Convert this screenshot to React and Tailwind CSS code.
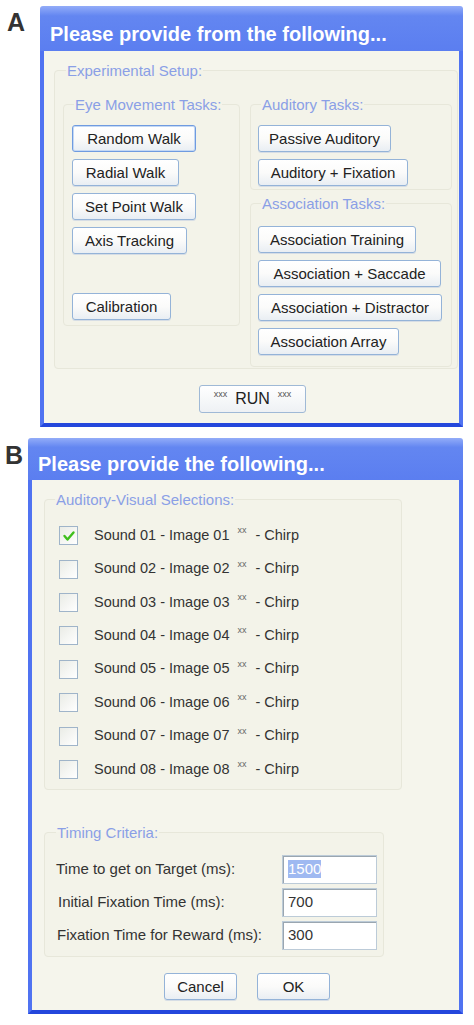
import React from "react";

const eyeTasks = [
    { label: "Random Walk", w: "w-[124px]", focus: true },
    { label: "Radial Walk", w: "w-[107px]" },
    { label: "Set Point Walk", w: "w-[124px]" },
    { label: "Axis Tracking", w: "w-[115px]" },
];

const auditoryTasks = [
    { label: "Passive Auditory", w: "w-[133px]" },
    { label: "Auditory + Fixation", w: "w-[150px]" },
];

const associationTasks = [
    { label: "Association Training", w: "w-[158px]" },
    { label: "Association + Saccade", w: "w-[183px]" },
    { label: "Association + Distractor", w: "w-[184px]" },
    { label: "Association Array", w: "w-[141px]" },
];

const sounds = ["01", "02", "03", "04", "05", "06", "07", "08"];

const timing = [
    { label: "Time to get on Target (ms):", value: "1500", selected: true, shift: "ml-0" },
    { label: "Initial Fixation Time (ms):", value: "700", shift: "ml-[2px]" },
    { label: "Fixation Time for Reward (ms):", value: "300", shift: "ml-[1px]" },
];

const XpButton = ({ children, className = "", focus = false }) => (
    <button
        className={`h-[27px] rounded-[3px] border bg-linear-to-b from-white via-[#fbfbfa] to-[#e9eef3] text-[15px] leading-none text-[#222] ${focus ? "border-[#6f9be0] shadow-[inset_0_0_0_1px_#c4d8f4]" : "border-[#94b3d8] shadow-[0_1px_0_#d6dde5]"} ${className}`}
    >
        {children}
    </button>
);

const Group = ({ title, legendMl = "ml-[10px]", className = "", children }) => (
    <fieldset className={`rounded-[4px] border border-[#e7e7da] bg-[#f3f3e9] ${className}`}>
        <legend className={`${legendMl} px-[1px] text-[15px] leading-[15px] text-[#8a9fe6]`}>{title}</legend>
        {children}
    </fieldset>
);

const TitleBar = ({ text, h, pt }) => (
    <div className={`${h} ${pt} pl-[10px] rounded-t-[3px] bg-linear-to-b from-[#93acf8] via-[#6386f1] via-[22%] to-[#5b7ef0]`}>
        <div className="text-[20px] leading-[20px] font-bold text-white">{text}</div>
    </div>
);

const Checkbox = ({ checked }) => (
    <div className="flex h-[19px] w-[19px] items-center justify-center border border-[#9fb4c9] bg-linear-to-br from-[#eaece6] to-white">
        {checked && (
            <svg width="14" height="14" viewBox="0 0 14 14">
                <polyline points="2.5,7 5.5,10.5 11.5,3.5" fill="none" stroke="#3fbf1d" strokeWidth="2.4" strokeLinecap="round" strokeLinejoin="round" />
            </svg>
        )}
    </div>
);

const App = () => {
    return (
        <div className="min-h-[1025px] w-[474px] bg-white pt-[6px] font-['Liberation_Sans',Arial,sans-serif]">
            {/* panel A */}
            <div className="flex">
                <div className="w-[40px] pl-[7px] pt-[4px] text-[25px] leading-none font-bold text-[#333]">A</div>
                <div className="w-[423px]">
                    <TitleBar text="Please provide from the following..." h="h-[45px]" pt="pt-[18px]" />
                    <div className="border-x-4 border-b-4 border-x-[#5073f1] border-b-[#2447dc] bg-[#f5f5ec] pt-[12px] pb-[10px]">
                        <Group title="Experimental Setup:" legendMl="ml-[11px]" className="ml-[10px] w-[404px]">
                            <div className="flex items-start pt-[19px] pl-[8px] pb-[1px]">
                                <Group title="Eye Movement Tasks:" className="w-[177px]">
                                    <div className="flex flex-col items-start gap-[7px] pt-[12.5px] pl-[8px] pb-[5px]">
                                        {eyeTasks.map((t) => (
                                            <XpButton key={t.label} className={t.w} focus={t.focus}>{t.label}</XpButton>
                                        ))}
                                        <XpButton className="mt-[32px] w-[99px]">Calibration</XpButton>
                                    </div>
                                </Group>
                                <div className="ml-[10px] flex w-[202px] flex-col gap-[6.5px]">
                                    <Group title="Auditory Tasks:">
                                        <div className="flex flex-col items-start gap-[7px] pt-[12.5px] pl-[7px] pb-[3px]">
                                            {auditoryTasks.map((t) => (
                                                <XpButton key={t.label} className={t.w}>{t.label}</XpButton>
                                            ))}
                                        </div>
                                    </Group>
                                    <Group title="Association Tasks:">
                                        <div className="flex flex-col items-start gap-[7px] pt-[14.5px] pl-[7px] pb-[11px]">
                                            {associationTasks.map((t) => (
                                                <XpButton key={t.label} className={t.w}>{t.label}</XpButton>
                                            ))}
                                        </div>
                                    </Group>
                                </div>
                            </div>
                        </Group>
                        <div className="mt-[16px] flex justify-center pl-[2px]">
                            <button className="flex h-[28px] w-[107px] items-center justify-center rounded-[3px] border border-[#9fb9d6] bg-linear-to-b from-white to-[#eef1f4] text-[#222]">
                                <span className="mb-[8px] text-[9px] leading-none text-[#555]">xxx</span>
                                <span className="mx-[8px] text-[16px] leading-none">RUN</span>
                                <span className="mb-[8px] text-[9px] leading-none text-[#555]">xxx</span>
                            </button>
                        </div>
                    </div>
                </div>
            </div>

            {/* panel B */}
            <div className="mt-[11px] flex">
                <div className="w-[28px] pl-[5px] pt-[5px] text-[25px] leading-none font-bold text-[#333]">B</div>
                <div className="w-[435px]">
                    <TitleBar text="Please provide the following..." h="h-[42px]" pt="pt-[16px]" />
                    <div className="border-x-4 border-b-4 border-x-[#5073f1] border-b-[#2447dc] bg-[#f5f5ec] pt-[12px] pb-[10px]">
                        <Group title="Auditory-Visual Selections:" className="ml-[12px] w-[358px]">
                            <div className="pt-[12.5px] pl-[14px] pb-[2.5px]">
                                {sounds.map((n, i) => (
                                    <div key={n} className="flex h-[33.4px] items-center text-[14.5px] text-[#333]">
                                        <Checkbox checked={i === 0} />
                                        <span className="ml-[16px]">Sound {n} - Image {n}</span>
                                        <span className="ml-[8px] mb-[10px] text-[9px] leading-none text-[#666]">xx</span>
                                        <span className="ml-[9px]">- Chirp</span>
                                    </div>
                                ))}
                            </div>
                        </Group>

                        <Group title="Timing Criteria:" legendMl="ml-[11px]" className="mt-[35.5px] ml-[12px] w-[340px]">
                            <div className="flex flex-col gap-[4px] pt-[14.5px] pl-[11px] pb-[6px]">
                                {timing.map((t) => (
                                    <div key={t.label} className="grid grid-cols-[226px_95px] items-center">
                                        <span className={`${t.shift} text-[15px] text-[#333]`}>{t.label}</span>
                                        <div className="flex h-[29px] items-center border border-[#bccbd8] bg-white pl-[5px] shadow-[inset_1px_1px_0_#9aa6b0]">
                                            <span className={`text-[15px] leading-[18px] ${t.selected ? "bg-[#9fb9f1] text-white" : "text-[#333]"}`}>{t.value}</span>
                                        </div>
                                    </div>
                                ))}
                            </div>
                        </Group>

                        <div className="mt-[16px] flex justify-center gap-[20px] pl-[3px]">
                            <XpButton className="w-[73px]">Cancel</XpButton>
                            <XpButton className="w-[73px]">OK</XpButton>
                        </div>
                    </div>
                </div>
            </div>
        </div>
    );
};

export default App;
